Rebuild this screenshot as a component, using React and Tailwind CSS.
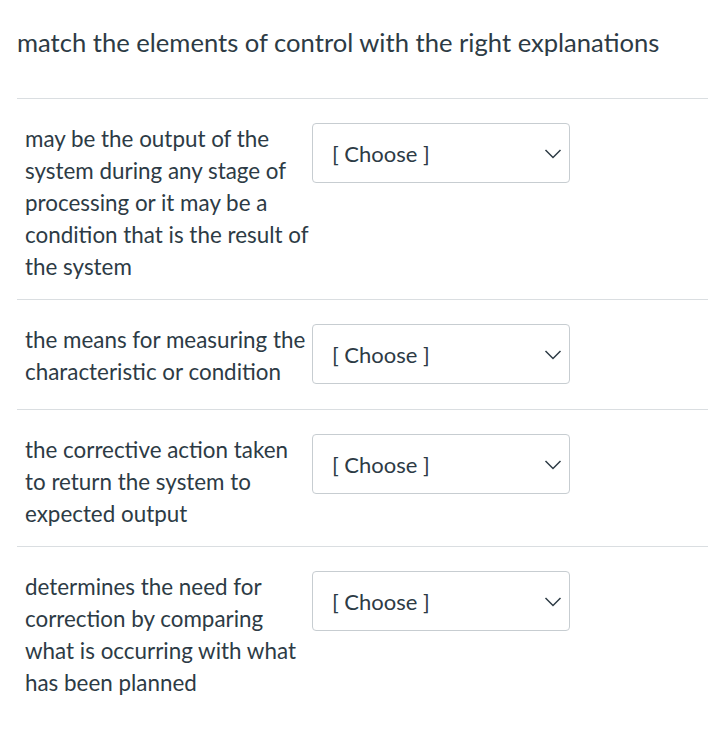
import React from "react";

const rows = [
  ["may be the output of the system during any stage of processing or it may be a condition that is the result of the system"],
  ["the means for measuring the characteristic or condition"],
  ["the corrective action taken to return the system to expected output"],
  ["determines the need for correction by comparing what is occurring with what has been planned"],
];

function Select() {
  return (
    <div className="mb-[9px] flex h-[60px] w-[258px] shrink-0 items-center justify-between rounded-[4px] border border-[#c7cdd1] bg-white pl-[19px] pr-[7px]">
      <span className="mt-[2px] text-[22px] leading-none text-[#2d3b45]">[ Choose ]</span>
      <svg width="18" height="10" viewBox="0 0 18 10" className="mt-[1px]">
        <path d="M1.5 1 L9 8.5 L16.5 1" fill="none" stroke="#2d3b45" strokeWidth="1.5" />
      </svg>
    </div>
  );
}

export default function App() {
  return (
    <div className="min-h-[732px] w-[708px] bg-white pl-[17px] font-['Lato','Liberation_Sans',sans-serif] text-[#2d3b45]">
      <h1 className="pt-[26px] pb-[40px] text-[25.6px] leading-[32px] font-normal">
        match the elements of control with the right explanations
      </h1>
      {rows.map((r, i) => (
        <div key={i} className="flex gap-[1px] border-t border-[#dadee1] pt-[24px] pb-[16px] pl-[8px]">
          <div className="w-[286px] text-[22.4px] leading-[32px]">{r[0]}</div>
          <Select />
        </div>
      ))}
    </div>
  );
}
